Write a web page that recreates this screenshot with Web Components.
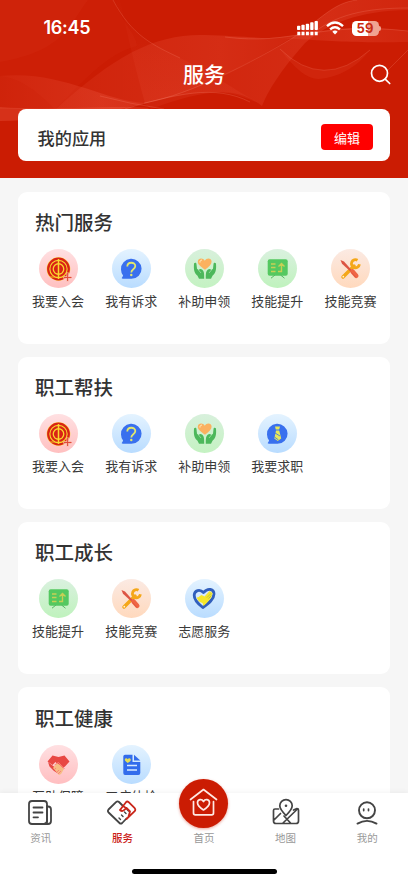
<!DOCTYPE html>
<html lang="zh-CN">
<head>
<meta charset="utf-8">
<title>服务</title>
<style>
html,body{margin:0;height:100%;overflow:hidden}
body{background:#f6f6f6;font-family:"Liberation Sans","Noto Sans CJK SC",sans-serif;color:#333}
</style>
</head>
<body>
<service-page></service-page>
<script>
const define = (name, html, setup) => customElements.define(name, class extends HTMLElement {
  connectedCallback() {
    if (this.shadowRoot) return;
    const t = document.createElement('template');
    t.innerHTML = html;
    this.attachShadow({mode: 'open'}).append(t.content.cloneNode(true));
    if (setup) setup(this, this.shadowRoot);
  }
});

/* Service glyphs, on a 39 x 39 disc */
const question = 'M9 20.500a10.300 10 0 1 1 10.500 9.300H11q-2.200-.3-.6-1.800l.7-1.500A10 10 0 0 1 9 20.500Z';
const ICONS = {
  join: ['#ffe0e2', '#ffc0c0', `<circle cx="19.500" cy="20" r="11.800" fill="#f9d82f"/><g fill="none" stroke="#d92316"><circle cx="19.500" cy="20" r="10.300" stroke-width="2.200"/><circle cx="19.500" cy="20" r="7" stroke-width="2.200"/></g><circle cx="19.500" cy="20" r="4.600" fill="#d92316"/><path d="M19.500 10v20" stroke="#f9d82f" stroke-width="1.500"/><path d="M11 28h5M23 28h4" stroke="#f9d82f" stroke-width=".8"/><path d="M28.600 23.500v9M24.300 28.500h8" stroke="#f9b9a5" stroke-width="2.400"/><path d="M28.600 24v8M25 28.500h7.500" stroke="#e04a3a" stroke-width="1"/>`],
  ask: ['#e4f3ff', '#b9dcff', `<path d="${question}" fill="#3970ee"/><path d="M15.300 17.500c0-5 8-4.800 8-.5 0 3.500-4 3-4 6.500" fill="none" stroke="#e3e86d" stroke-width="1.800"/><circle cx="19.300" cy="26" r="1.200" fill="#e3e86d"/>`],
  aid: ['#d8f0dc', '#c4f2c2', `<path d="M20 20.700c-5-3.600-7.200-5.500-7.200-8 0-3.400 5-4.400 7-.9 2-3.500 6.800-2.500 6.800.9 0 2.500-2.300 4.800-6.600 8Z" fill="#fbb15f"/><path d="M15 13.500c-.2-1.500.8-2.500 2-2.400" stroke="#fff0c5" fill="none"/><path d="M9 14.500c1-1.200 2.400-.7 2.500.7l.5 4.500 1.600 1.200c1.800-1.800 3.500-.7 4.500.8 1 1.500 1.100 3 1.100 8H14l-1.500-3C9.500 24 8.500 21.500 9 14.500ZM31 14.500c-1-1.200-2.400-.7-2.500.7l-.5 4.500-1.600 1.200c-1.800-1.800-3.500-.7-4.500.8-1 1.500-1.100 3-1.100 8H26l1.500-3C30.500 24 31.500 21.500 31 14.500Z" fill="#4cb85b"/><path d="m13.500 21 2.500 3M26.500 21 24 24" stroke="#bfecc0" stroke-width=".6"/>`],
  skill: ['#daf1df', '#bff2bd', `<rect x="9.700" y="10.300" width="20" height="16.500" rx="2" fill="#54c860"/><path d="m17 26-4 3.200M22.500 26l4 3.200" stroke="#54b960" stroke-width="1"/><path d="M13 15h4.500M13 18.500h4.500M13 22.500h4.500M20 22.500h3.500V14M20.500 17.500l3-3 3 3" fill="none" stroke="#c8cf55" stroke-width="1.400"/>`],
  contest: ['#fbeae3', '#ffd9bd', `<path d="m12 28 11-11" stroke="#f4a719" stroke-width="3.500" stroke-linecap="round"/><path d="M26.500 11.300a4 4 0 1 0 1.900 4" fill="none" stroke="#f4a719" stroke-width="2.800"/><circle cx="12.300" cy="27.700" r=".9" fill="#fff1d5"/><path d="m9.500 11 3.500 1.500 8 9-1.300 1.200-8.700-8Z" fill="#dc5443"/><path d="m21.500 22.500 3.700 4.200" stroke="#ef6544" stroke-width="4.600" stroke-linecap="round"/><path d="m20.500 23.500 4 4.500" stroke="#d94d3d" stroke-width=".7"/>`],
  job: ['#e4f3ff', '#b9dcff', `<path d="${question}" fill="#3970ee"/><path d="M17 12.500h5l-.8 3h-3.400ZM18 16.500h3.200l2 8-3.400 2.500-3.500-2.500Z" fill="#e7e85a"/><path d="m17 19 5 3M16.500 23l4 3" stroke="#3970ee" stroke-width=".8"/>`],
  volunteer: ['#e4f3ff', '#b9dcff', `<path d="M17.800 28.500C12 24 9 20.500 9.200 16c.3-4.500 5.500-6.500 9.300-2.500 4.500-5 10.500-3.500 10.500 1.500 0 5-5 9-11.200 13.500Z" fill="#d5eaff" stroke="#315fbc" stroke-width="2.800" stroke-linejoin="round"/><path d="M11.500 18c2 1.500 3.500-1.500 5-2l3 1.500 5-5.500 1 1 1.500-.5-.5 1.500 1.500.5-1.500 1.500.5 1c-2 3.800-4.500 6.500-8.500 10l-1-3c-3-.5-5-2.500-6-6Z" fill="#f6e72b"/><path d="m22 18.500 4-4M23.500 19.500l3-3" stroke="#8baa59" stroke-width=".6"/>`],
  mutual: ['#ffe0e2', '#ffbec0', `<path d="m8.500 16.500 5-6 6 1.500 6-1.500 5 6-4.500 5-3.500 2.500-6-7-3 3Z" fill="#e84843"/><path d="m9 17 6.500 5 2.500 1 4 4-2 2-5-3-4.500-4.500Z" fill="#e84843"/><path d="m14 23 6 7 2-1 3-5-4-4-3-2Z" fill="#f6bc83"/><path d="m15.500 20 4-2.500 6 6.500M15 25l2-2M17 28l3-3M19 29l3-3" fill="none" stroke="#fa817b" stroke-width="1"/>`],
  exam: ['#e4f3ff', '#b9dcff', `<path d="M13 9.700h7.500V17h7.800v11q0 2-2 2H13q-1.700 0-1.700-2V11.500q0-1.800 1.700-1.800Z" fill="#326cec"/><path d="M22 9.700 28.300 15.500H22Z" fill="#326cec"/><path d="M15.700 18c-2.500-1.700-3.300-2.700-2.800-4 .5-1.200 2.200-1 2.800.2.600-1.200 2.500-1.400 3 0 .5 1.300-.7 2.500-3 3.800Z" fill="#e7df55"/><path d="M15 20.500h10M15 25h10" stroke="#d8eaff" stroke-width="1.500"/>`]
};

define('service-item', `<style>
:host{display:flex;flex-direction:column;align-items:center;width:73.1px;box-sizing:border-box;flex:none}
.disc{width:39px;height:39px;border-radius:50%}
svg{display:block;width:39px;height:39px}
span{font-size:13px;line-height:18px;margin-top:4.500px;white-space:nowrap;color:#3a3a3a}
</style><div class="disc"></div><span><slot></slot></span>`, (host, root) => {
  const [a, b, art] = ICONS[host.getAttribute('icon')];
  const disc = root.querySelector('.disc');
  disc.style.background = `linear-gradient(${a},${b})`;
  disc.innerHTML = `<svg viewBox="0 0 39 39">${art}</svg>`;
});

define('service-card', `<style>
:host{display:block;flex:none;height:152.600px;box-sizing:border-box;border-radius:9px;background:#fff;padding:17.500px 3px 0 3.500px}
h2{margin:0 0 11px 13.500px;font-size:19.500px;line-height:29px;font-weight:500}
.items{display:flex}
</style><h2></h2><div class="items"><slot></slot></div>`, (h, r) => r.querySelector('h2').textContent = h.getAttribute('heading'));

define('status-bar', `<style>
:host{display:flex;align-items:center;justify-content:space-between;height:28px;padding:14px 27.500px 0 43.500px;color:#fff}
time{font:600 18px/28px Inter,sans-serif;letter-spacing:-.3px}
.right{display:flex;align-items:center;gap:8px}
svg{display:block}
.battery{position:relative;width:29px;height:15px}
b{display:block;width:27px;height:15px;border-radius:4.500px;background:linear-gradient(90deg,#fff 59%,#f0a392 59%);font:700 13px/15px Inter,sans-serif;text-align:center;color:#c92a12}
i{position:absolute;right:0;top:5px;width:1.500px;height:5px;border-radius:0 2px 2px 0;background:#f0a392}
</style><time>16:45</time><div class="right">
<svg width="21" height="15" viewBox="0 0 21 15" fill="#fff"><rect y="4.800" width="3.300" height="4.200" rx=".8"/><rect x="4.400" y="3.800" width="3.300" height="5.200" rx=".8"/><rect x="8.800" y="2.800" width="3.300" height="6.200" rx=".8"/><rect x="13.200" y="1.300" width="3.300" height="7.700" rx=".8"/><rect x="17.600" width="3.300" height="9" rx=".8"/><path d="M.3 10.800h2.900v3.400H.3ZM4.600 10.800h2.900v3.400H4.600ZM9 10.800h2.900v3.400H9ZM13.400 10.800h2.900v3.400h-2.900ZM17.800 10.800h2.900v3.400h-2.900Z"/></svg>
<svg width="18" height="14" viewBox="0 0 18 14" fill="none" stroke="#fff" stroke-width="2.400"><path d="M1 5.100Q9-2.200 17 5.100M4.100 8.400q4.900-4.300 9.800 0"/><path d="M9 13.400 6.300 10.700q2.700-2.200 5.400 0Z" fill="#fff" stroke="none"/></svg>
<div class="battery"><b>59</b><i></i></div></div>`);

define('page-header', `<style>
:host{display:block;position:relative;height:178px;background:#cb1c03;overflow:hidden;flex:none}
.wave{position:absolute;inset:0}
.front{position:relative}
.title{display:grid;grid-template-columns:1fr auto 1fr;align-items:center;height:64px;padding:0 17px;color:#fff}
h1{margin:0;padding-top:1px;grid-column:2;font-size:21px;line-height:30px;font-weight:500}
.title svg{justify-self:end}
.mine{display:flex;align-items:center;justify-content:space-between;box-sizing:border-box;height:52px;margin:3px 18px 0;padding:4px 17px 0 19.500px;border-radius:8px;background:#fff;font-size:17.200px;font-weight:500}
button{width:52px;height:26px;border:0;border-radius:4px;background:#f00;color:#fff;padding:0;font:13px "Liberation Sans","Noto Sans CJK SC",sans-serif}
</style>
<svg class="wave" width="408" height="178" viewBox="0 0 408 178" fill="none">
<defs><linearGradient id="w" x1="0" y1="0" x2="1" y2="0"><stop stop-color="#ff7560" stop-opacity=".08"/><stop offset=".7" stop-color="#ff7560" stop-opacity=".19"/><stop offset="1" stop-color="#ff7560" stop-opacity=".12"/></linearGradient>
<linearGradient id="v" x1="0" y1="0" x2="0" y2="1"><stop stop-color="#ff7560" stop-opacity=".01"/><stop offset="1" stop-color="#ff7560" stop-opacity=".1"/></linearGradient></defs>
<path d="M0 0H113C125 27 135 32 137 46C105 54 80 85 55 109Q25 78 0 76Z" fill="#ff6a50" fill-opacity=".05"/>
<path d="M0 62C65 51 70 23 88 0H0Z" fill="#ff6a50" fill-opacity=".06"/>
<path d="M0 76C60 70 102 100 144 103L120 109H0Z" fill="url(#w)"/>
<path d="M55 110C115 55 155 34 204 35C245 36 275 40 291 38C256 60 191 95 144 103L125 109Z" fill="url(#w)"/>
<path d="M144 103C191 95 256 60 291 39C321 20 332 3 357 0H408V10C360 10 325 25 305 43C280 71 268 91 262 106C235 84 200 91 151 109Z" fill="url(#w)"/>
<path d="M225 37C292 46 318 19 408 31V42C352 43 335 41 296 39Z" fill="url(#w)"/>
<path d="M113 0C132 36 153 45 180 58C217 76 239 93 263 105C221 86 206 90 145 103Q133 61 120 0Z" fill="url(#v)"/>
<path d="M0 107C50 111 110 105 150 108L120 119C80 107 48 121 0 121Z" fill="#ff8068" fill-opacity=".22"/>
<path d="M280 49Q323 91 370 50Q350 76 319 79Q303 80 280 49Z" fill="#ff7560" fill-opacity=".1"/>
<g stroke="#ff9a88" stroke-opacity=".25" stroke-width=".8"><path d="M113 0C132 36 153 45 180 58"/><path d="M225 37C292 46 318 21 408 31" /><path d="M144 103C191 95 256 60 291 39C321 20 332 3 357 0"/><path d="M311 35C334 15 365 8 408 8"/><path d="M280 49Q323 91 370 50M388 70 408 50"/><path d="M125 109C175 94 215 84 250 102M100 96Q130 104 164 109"/></g>
</svg>
<div class="front"><status-bar></status-bar><div class="title"><h1>服务</h1>
<svg width="21" height="21" viewBox="0 0 21 21" fill="none" stroke="#fff" stroke-width="1.700" stroke-linecap="round"><circle cx="9.500" cy="9.300" r="8"/><path d="m15.200 15.200 4.500 4.300"/></svg></div>
<div class="mine"><span>我的应用</span><button>编辑</button></div></div>`);

const TABS = {
  news: `<g stroke-width="1.800"><rect x="3" y="3" width="18" height="23" rx="3"/><path d="M21 8.500h1q3 0 3 3V23q0 3-3 3h-4M21 8v15q0 3-3 3M7.500 9.500h9M7.500 14.500h9M7.500 19.300H12"/></g>`,
  service: `<g stroke-width="1.800"><path d="M15.500 7.500 12 4Q10.500 2.700 9 4.200L1.500 11.500Q.3 13 1.600 14.500L12.500 25q1.300 1.300 2.700 0l4.300-4.500"/><path d="m14.500 17 1.500 1.500M17.500 14l1.500 1.500M20 11.500l1.500 1.500M12 20l1.500 1.500" stroke-width="1.400"/><path d="m13 12 6-7.800q1.200-1.300 2.700 0l6 6q1.200 1.500 0 3L19.500 21M13 12q2 2 4 .2l2.500-2.200 3.500 3.500-1.500 5M16 8l3 2" stroke="#c9261a"/></g>`,
  map: `<g stroke-width="1.700"><path d="M7.500 11H4q-1.500 0-1.500 1.500V23q0 2.500 2.500 2.500h20q2.500 0 2.500-2.500V12q0-1.500-1.500-1.500L22.500 12 M3 22l6.500-6.500M13 18l6.500 7M26.500 11 12 25"/><path d="M15 17.500C10.500 13 8.800 10.500 8.800 7.800a6.200 6.200 0 0 1 12.400 0c0 2.700-1.700 5.200-6.200 9.700Z" fill="#fff"/><circle cx="15" cy="7.800" r="1.300" fill="#444" stroke="none"/></g>`,
  me: `<g stroke-width="1.900"><circle cx="15" cy="12.300" r="8"/><path d="M5.500 25.600q9.500-5.400 19 0"/><path d="M11.700 11v1.600M16.500 11v1.600" stroke-width="1.700"/></g>`
};
define('tab-item', `<style>
:host{display:flex;flex-direction:column;align-items:center;flex:1;color:#999;font-size:10.500px;line-height:16px}
:host([active]){color:#cb1c18;font-weight:500}
.art{height:30px;margin-top:5px}
svg{display:block}
.art.home{width:49px;height:49px;border-radius:50%;background:#cb1c03;margin-top:-14px;box-shadow:0 1px 3px #cb1c0366}
span{margin-top:2px}
</style><div class="art"></div><span><slot></slot></span>`, (h, r) => {
  const n = h.getAttribute('icon'), a = r.querySelector('.art');
  if (n === 'home') {
    a.classList.add('home');
    a.innerHTML = '<svg width="49" height="49" viewBox="0 0 49 49" fill="none" stroke="#ffe9e4" stroke-width="1.700" stroke-linecap="round" stroke-linejoin="round"><path d="M11.500 20.500 24.500 10.500l13 10M14.500 22.500V34q0 1.800 1.800 1.800h16.400q1.800 0 1.800-1.800V22.500"/><path d="M24.500 31C20 28 18.500 26 18.500 23.700c0-3.400 4.300-4.200 6-1.200 1.700-3 6-2.200 6 1.200 0 2.300-1.500 4.300-6 7.300Z"/></svg>';
  } else a.innerHTML = `<svg width="30" height="30" viewBox="0 0 30 30" fill="none" stroke="#444" stroke-linecap="round" stroke-linejoin="round">${TABS[n]}</svg>`;
});
define('tab-bar', `<style>
:host{display:block;height:90px;background:#fff;position:relative;flex:none;box-shadow:0 -1px 5px #0000000d}
nav{display:flex;height:76px}
.home-line{width:145px;height:5px;border-radius:3px;background:#000;margin:0 auto}
</style><nav><tab-item icon="news">资讯</tab-item><tab-item icon="service" active>服务</tab-item><tab-item icon="home">首页</tab-item><tab-item icon="map">地图</tab-item><tab-item icon="me">我的</tab-item></nav><div class="home-line"></div>`);

define('service-page', `<style>
:host{display:flex;flex-direction:column;width:408px;height:883px;overflow:hidden;background:#f6f6f6}
main{flex:1;min-height:0;overflow:hidden;display:flex;flex-direction:column;gap:12.600px;padding:13.500px 18px 0}
</style><page-header></page-header><main>
<service-card heading="热门服务"><service-item icon="join">我要入会</service-item><service-item icon="ask">我有诉求</service-item><service-item icon="aid">补助申领</service-item><service-item icon="skill">技能提升</service-item><service-item icon="contest">技能竞赛</service-item></service-card>
<service-card heading="职工帮扶"><service-item icon="join">我要入会</service-item><service-item icon="ask">我有诉求</service-item><service-item icon="aid">补助申领</service-item><service-item icon="job">我要求职</service-item></service-card>
<service-card heading="职工成长"><service-item icon="skill">技能提升</service-item><service-item icon="contest">技能竞赛</service-item><service-item icon="volunteer">志愿服务</service-item></service-card>
<service-card heading="职工健康"><service-item icon="mutual">互助保障</service-item><service-item icon="exam">工疗体检</service-item></service-card>
</main><tab-bar></tab-bar>`);
</script>
</body>
</html>
